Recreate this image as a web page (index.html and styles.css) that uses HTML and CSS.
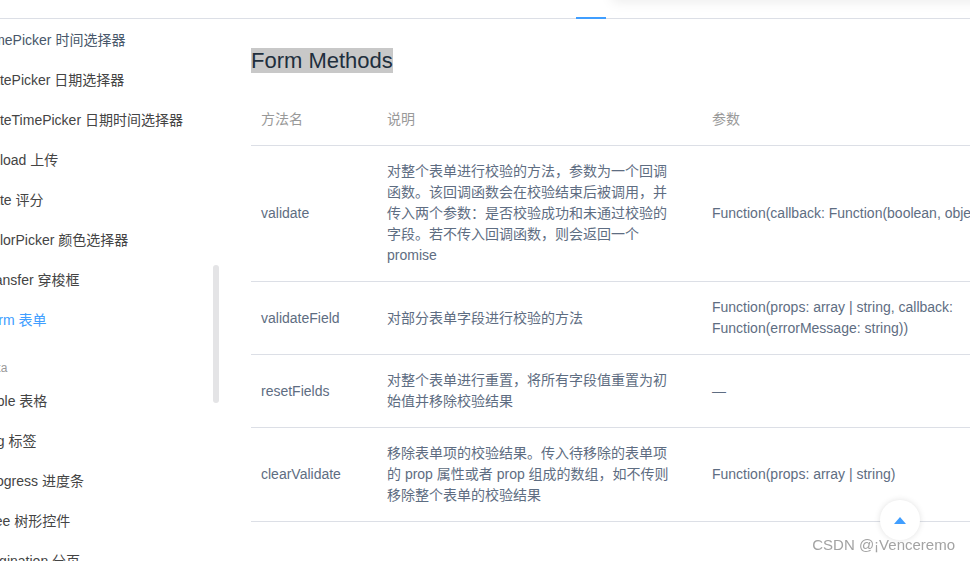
FILE: index.html
```html
<!DOCTYPE html>
<html lang="zh-CN">
<head>
<meta charset="utf-8">
<title>Form Methods</title>
<link rel="stylesheet" href="styles.css">
</head>
<body>
<header class="topbar">
  <span class="tab-active"></span>
  <div class="dropdown-shadow"></div>
</header>
<div class="layout">
  <aside class="sidebar">
    <ul class="nav">
      <li class="nav-item nav-hover">TimePicker 时间选择器</li>
      <li class="nav-item">DatePicker 日期选择器</li>
      <li class="nav-item">DateTimePicker 日期时间选择器</li>
      <li class="nav-item">Upload 上传</li>
      <li class="nav-item">Rate 评分</li>
      <li class="nav-item">ColorPicker 颜色选择器</li>
      <li class="nav-item">Transfer 穿梭框</li>
      <li class="nav-item nav-active">Form 表单</li>
      <li class="nav-group">Data</li>
      <li class="nav-item">Table 表格</li>
      <li class="nav-item">Tag 标签</li>
      <li class="nav-item">Progress 进度条</li>
      <li class="nav-item">Tree 树形控件</li>
      <li class="nav-item">Pagination 分页</li>
    </ul>
    <div class="scroll-thumb"></div>
  </aside>
  <main class="content">
    <h3 class="title"><span class="selected">Form Methods</span></h3>
    <table class="methods">
      <colgroup>
        <col class="col-name">
        <col class="col-desc">
        <col class="col-param">
      </colgroup>
      <thead>
        <tr><th>方法名</th><th>说明</th><th>参数</th></tr>
      </thead>
      <tbody>
        <tr>
          <td>validate</td>
          <td class="desc">对整个表单进行校验的方法，参数为一个回调函数。该回调函数会在校验结束后被调用，并传入两个参数：是否校验成功和未通过校验的字段。若不传入回调函数，则会返回一个 promise</td>
          <td class="param">Function(callback: Function(boolean, object))</td>
        </tr>
        <tr>
          <td>validateField</td>
          <td class="desc">对部分表单字段进行校验的方法</td>
          <td class="param">Function(props: array | string, callback: Function(errorMessage: string))</td>
        </tr>
        <tr>
          <td>resetFields</td>
          <td class="desc">对整个表单进行重置，将所有字段值重置为初始值并移除校验结果</td>
          <td class="param">—</td>
        </tr>
        <tr>
          <td>clearValidate</td>
          <td class="desc">移除表单项的校验结果。传入待移除的表单项的 prop 属性或者 prop 组成的数组，如不传则移除整个表单的校验结果</td>
          <td class="param">Function(props: array | string)</td>
        </tr>
      </tbody>
    </table>
  </main>
</div>
<div class="backtop"><span class="caret-up"></span></div>
<div class="watermark">CSDN @¡Venceremo</div>
</body>
</html>
```
FILE: styles.css
```css
html, body {
  margin: 0;
  padding: 0;
  height: 100%;
  overflow: hidden;
  background: #fff;
  font-family: "Liberation Sans", Arial, "Noto Sans CJK SC", sans-serif;
  font-size: 14px;
}

.topbar {
  position: relative;
  height: 18px;
  border-bottom: 1px solid #dcdfe6;
  display: flex;
  align-items: flex-end;
}

.tab-active {
  display: block;
  width: 30px;
  height: 2px;
  margin-left: 576px;
  margin-bottom: -1px;
  background: #409eff;
  position: relative;
}

.dropdown-shadow {
  position: absolute;
  top: -40px;
  left: 612px;
  width: 420px;
  height: 40px;
  background: #fff;
  box-shadow: 0 2px 12px 0 rgba(0, 0, 0, 0.08);
}

.layout {
  display: flex;
  height: 542px;
}

.sidebar {
  position: relative;
  width: 220px;
  flex: none;
  overflow: hidden;
}

.nav {
  list-style: none;
  margin: 0 0 0 -18px;
  padding: 1px 0 0 0;
}

.nav-item {
  line-height: 40px;
  height: 40px;
  white-space: nowrap;
  color: #444;
  font-size: 14px;
}

.nav-hover {
  color: #48576a;
}

.nav-active {
  color: #409eff;
}

.nav-group {
  padding-top: 15px;
  line-height: 26px;
  height: 26px;
  font-size: 12px;
  color: #999;
  white-space: nowrap;
}

.scroll-thumb {
  position: absolute;
  left: 213px;
  top: 246px;
  width: 6px;
  height: 138px;
  border-radius: 3px;
  background: #e4e4e6;
}

.content {
  flex: 1;
  min-width: 0;
  overflow: hidden;
  padding-left: 31px;
}

.title {
  margin: 29px 0 21px 0;
  font-size: 22px;
  line-height: 25px;
  font-weight: normal;
  color: #1f2f3d;
}

.selected {
  background: #c8c8c8;
}

.methods {
  table-layout: fixed;
  width: 811px;
  border-collapse: separate;
  border-spacing: 0;
  font-size: 14px;
  line-height: 21px;
}

.col-name { width: 126px; }
.col-desc { width: 325px; }
.col-param { width: 360px; }

.methods th {
  text-align: left;
  font-weight: normal;
  color: #999;
  padding: 15px 10px;
  border-bottom: 1px solid #dcdfe6;
  white-space: nowrap;
}

.methods td {
  padding: 15px 10px;
  border-bottom: 1px solid #dcdfe6;
  color: #5e6d82;
  vertical-align: middle;
}

.methods td.desc {
  padding-right: 27px;
}

.methods td.param {
  padding-right: 20px;
}

.backtop {
  position: fixed;
  right: 50px;
  bottom: 21px;
  width: 40px;
  height: 40px;
  border-radius: 50%;
  background: #fff;
  box-shadow: 0 0 6px rgba(0, 0, 0, 0.12);
  display: flex;
  align-items: center;
  justify-content: center;
}

.caret-up {
  display: block;
  width: 0;
  height: 0;
  border-left: 6.5px solid transparent;
  border-right: 6.5px solid transparent;
  border-bottom: 7px solid #409eff;
}

.watermark {
  position: fixed;
  right: 15px;
  bottom: 8px;
  font-size: 15px;
  line-height: 17px;
  color: #a3a3a3;
  white-space: nowrap;
}
```
